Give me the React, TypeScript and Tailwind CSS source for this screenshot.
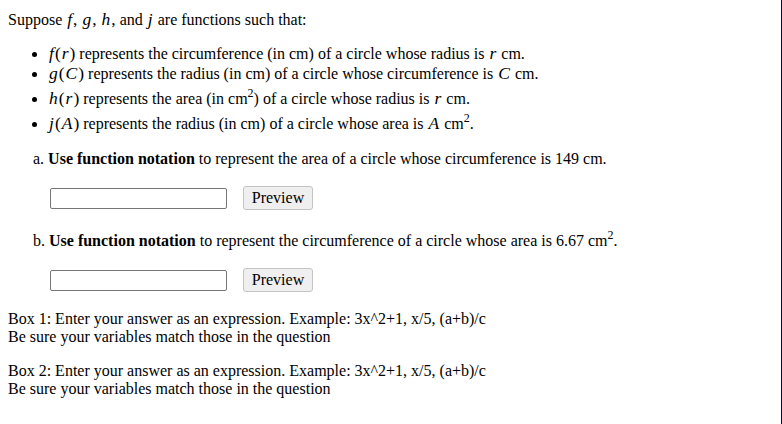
import React from "react";

const V = ({ children }: { children: React.ReactNode }) => (
  <span className="italic mx-[1px]">{children}</span>
);

const M = ({ children }: { children: React.ReactNode }) => (
  <span className="text-[17.5px] leading-none">{children}</span>
);

const Sq = () => (
  <span className="relative -top-[7px] text-[12px] leading-none">2</span>
);

const AnswerRow = () => (
  <div className="flex items-center pl-[42px] h-[24px]">
    <input
      type="text"
      className="w-[177px] h-[21px] border border-[#767676] rounded-[2px] bg-white"
    />
    <button className="ml-[16px] w-[70px] h-[24px] border border-[#c4c4c4] rounded-[3px] bg-[#efefef] text-[16px] leading-none text-black">
      Preview
    </button>
  </div>
);

export default function App() {
  return (
    <div
      className="w-[782px] h-[424px] border-r border-[#000080] bg-white text-black text-[16px] leading-[18px]"
      style={{ fontFamily: '"Liberation Serif", "Times New Roman", serif' }}
    >
      <div className="pl-[8px] pt-[11px]">
        <p>
          Suppose{" "}
          <M>
            <V>f</V>,
          </M>{" "}
          <M>
            <V>g</V>,
          </M>{" "}
          <M>
            <V>h</V>,
          </M>{" "}
          and{" "}
          <M>
            <V>j</V>
          </M>{" "}
          are functions such that:
        </p>

        <ul className="list-disc pl-[40px] mt-[15px] leading-[20px]">
          <li>
            <M>
              <V>f</V>(<V>r</V>)
            </M>{" "}
            represents the circumference (in cm) of a circle whose radius is{" "}
            <M>
              <V>r</V>
            </M>{" "}
            cm.
          </li>
          <li>
            <M>
              <V>g</V>(<V>C</V>)
            </M>{" "}
            represents the radius (in cm) of a circle whose circumference is{" "}
            <M>
              <V>C</V>
            </M>{" "}
            cm.
          </li>
          <li className="mt-[5px]">
            <M>
              <V>h</V>(<V>r</V>)
            </M>{" "}
            represents the area (in cm<Sq />) of a circle whose radius is{" "}
            <M>
              <V>r</V>
            </M>{" "}
            cm.
          </li>
          <li className="mt-[5px]">
            <M>
              <V>j</V>(<V>A</V>)
            </M>{" "}
            represents the radius (in cm) of a circle whose area is{" "}
            <M>
              <V>A</V>
            </M>{" "}
            cm<Sq />.
          </li>
        </ul>

        <p className="pl-[25px] mt-[16px]">
          a. <b>Use function notation</b> to represent the area of a circle whose circumference is 149 cm.
        </p>
        <div className="mt-[18px]">
          <AnswerRow />
        </div>

        <p className="pl-[25px] mt-[22px]">
          b. <b>Use function notation</b> to represent the circumference of a circle whose area is 6.67 cm<Sq />.
        </p>
        <div className="mt-[18px]">
          <AnswerRow />
        </div>

        <div className="mt-[18px] leading-[18px]">
          <p>Box 1: Enter your answer as an expression. Example: 3x^2+1, x/5, (a+b)/c</p>
          <p>Be sure your variables match those in the question</p>
        </div>
        <div className="mt-[16px] leading-[18px]">
          <p>Box 2: Enter your answer as an expression. Example: 3x^2+1, x/5, (a+b)/c</p>
          <p>Be sure your variables match those in the question</p>
        </div>
      </div>
    </div>
  );
}
